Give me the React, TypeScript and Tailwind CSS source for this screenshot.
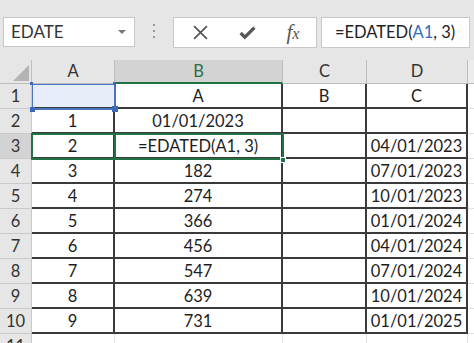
import React from 'react';

const rows = [
  { n: '1', a: '', b: 'A', c: 'B', d: 'C' },
  { n: '2', a: '1', b: '01/01/2023', c: '', d: '' },
  { n: '3', a: '2', b: '=EDATED(A1, 3)', c: '', d: '04/01/2023' },
  { n: '4', a: '3', b: '182', c: '', d: '07/01/2023' },
  { n: '5', a: '4', b: '274', c: '', d: '10/01/2023' },
  { n: '6', a: '5', b: '366', c: '', d: '01/01/2024' },
  { n: '7', a: '6', b: '456', c: '', d: '04/01/2024' },
  { n: '8', a: '7', b: '547', c: '', d: '07/01/2024' },
  { n: '9', a: '8', b: '639', c: '', d: '10/01/2024' },
  { n: '10', a: '9', b: '731', c: '', d: '01/01/2025' },
];

// data cells get a heavy border like the "All Borders" style in the sheet
const cell = 'h-[25px] flex items-center justify-center border-b-2 border-r-2 border-[#3a3a3a] text-[#1e1e1e] pt-[1px]';
const rowHead = 'h-[25px] flex items-center justify-center bg-[#e6e6e6] border-b border-r border-[#c9c9c9] text-[#333]';
const colHead = 'h-[24px] flex items-center justify-center bg-[#e6e6e6] border-r border-b border-[#bdbdbd] text-[#333]';

const Toolbar = () => (
  <div className="h-[60px] bg-[#e6e6e6] flex pt-[17px] pl-[3px]">
    <div className="w-[132px] h-[30px] bg-white border border-[#c8c8c8] flex items-center justify-between pl-[7px] pr-[8px]">
      <span className="text-[17px] text-[#333]">EDATE</span>
      <svg width="8" height="5" viewBox="0 0 8 5"><path d="M0 0h8L4 4z" fill="#777" /></svg>
    </div>
    <div className="w-[38px] flex flex-col items-center pt-[7px] gap-[4px]">
      <div className="w-[2px] h-[2px] bg-[#999]" />
      <div className="w-[2px] h-[2px] bg-[#999]" />
      <div className="w-[2px] h-[2px] bg-[#999]" />
    </div>
    <div className="w-[144px] h-[31px] bg-white border border-[#c8c8c8] flex items-center">
      <div className="w-[50px] flex justify-center pl-[2px]">
        <svg width="15" height="15" viewBox="0 0 14 14"><path d="M1 1L13 13M13 1L1 13" stroke="#555" strokeWidth="1.6" /></svg>
      </div>
      <div className="w-[46px] flex justify-center">
        <svg width="17" height="14" viewBox="0 0 16 13"><path d="M1.5 6.5L5.5 10.5L14.5 1.5" stroke="#555" strokeWidth="3" fill="none" /></svg>
      </div>
      <div className="w-[46px] flex justify-center">
        <span className="font-['Liberation_Serif'] italic text-[21px] text-[#555] leading-none">f<span className="text-[16px]">x</span></span>
      </div>
    </div>
    <div className="ml-[4px] w-[149px] h-[31px] bg-white border border-[#c8c8c8] flex items-center pl-[13px]">
      <span className="text-[16.5px] text-[#222]">=EDATED(<span className="text-[#2f6db5]">A1</span>, 3)</span>
    </div>
  </div>
);

export default function App() {
  return (
    <div className="w-[474px] h-[343px] overflow-hidden bg-white font-['Lato',sans-serif] text-[16.5px]">
      <Toolbar />
      <div className="relative grid grid-cols-[32px_83px_168px_84px_101px_1fr]">
        <div className="h-[24px] bg-[#e6e6e6] border-r border-b border-[#bdbdbd] flex items-end justify-end p-[2px]">
          <svg width="16" height="16" viewBox="0 0 16 16"><path d="M16 0V16H0z" fill="#b4b4b4" /></svg>
        </div>
        <div className={colHead}>A</div>
        <div className="h-[24px] flex items-center justify-center bg-[#d3d3d3] border-r border-[#bdbdbd] border-b-2 border-b-[#217346] text-[#2e6b47]">B</div>
        <div className={colHead}>C</div>
        <div className={colHead}>D</div>
        <div className="h-[24px] bg-[#ececec] border-b border-[#bdbdbd]" />

        {rows.map((r) => (
          <React.Fragment key={r.n}>
            <div className={r.n === '3' ? 'h-[25px] flex items-center justify-center bg-[#d3d3d3] border-b border-r border-[#c9c9c9] text-[#333]' : rowHead}>{r.n}</div>
            <div className={r.n === '1' ? 'h-[25px] border-b-2 border-[#3a3a3a] bg-[#e8eef9]' : cell}>{r.a}</div>
            <div className={cell}>{r.b}</div>
            <div className={cell}>{r.c}</div>
            <div className={cell}>{r.d}</div>
            <div className="h-[25px] border-b border-[#e0e0e0]" />
          </React.Fragment>
        ))}

        <div className="h-[25px] bg-[#e6e6e6] border-r border-[#c9c9c9] flex items-start justify-center text-[#333]">11</div>
        <div className="h-[25px] border-r border-[#e0e0e0]" />
        <div className="h-[25px] border-r border-[#e0e0e0]" />
        <div className="h-[25px] border-r border-[#e0e0e0]" />
        <div className="h-[25px] border-r border-[#e0e0e0]" />
        <div className="h-[25px]" />

        {/* A1 reference highlight */}
        <div className="absolute left-[32px] top-[24px] w-[84px] h-[26px] border border-[#4a74c0] border-r-2 border-b-2" />
        <div className="absolute left-[30px] top-[22px] w-[3px] h-[3px] bg-[#3b68b8]" />
        <div className="absolute left-[113px] top-[22px] w-[3px] h-[3px] bg-[#3b68b8]" />
        <div className="absolute left-[30px] top-[47px] w-[5px] h-[5px] bg-[#3b68b8]" />
        <div className="absolute left-[112px] top-[46px] w-[6px] h-[6px] bg-[#3b68b8]" />

        {/* active selection */}
        <div className="absolute left-[31px] top-[73px] w-[253px] h-[27px] border-2 border-[#217346]" />
        <div className="absolute left-[114px] top-[73px] w-[2px] h-[27px] bg-[#217346]" />
        <div className="absolute left-[280px] top-[97px] w-[6px] h-[6px] bg-[#217346] border border-white" />
      </div>
    </div>
  );
}
